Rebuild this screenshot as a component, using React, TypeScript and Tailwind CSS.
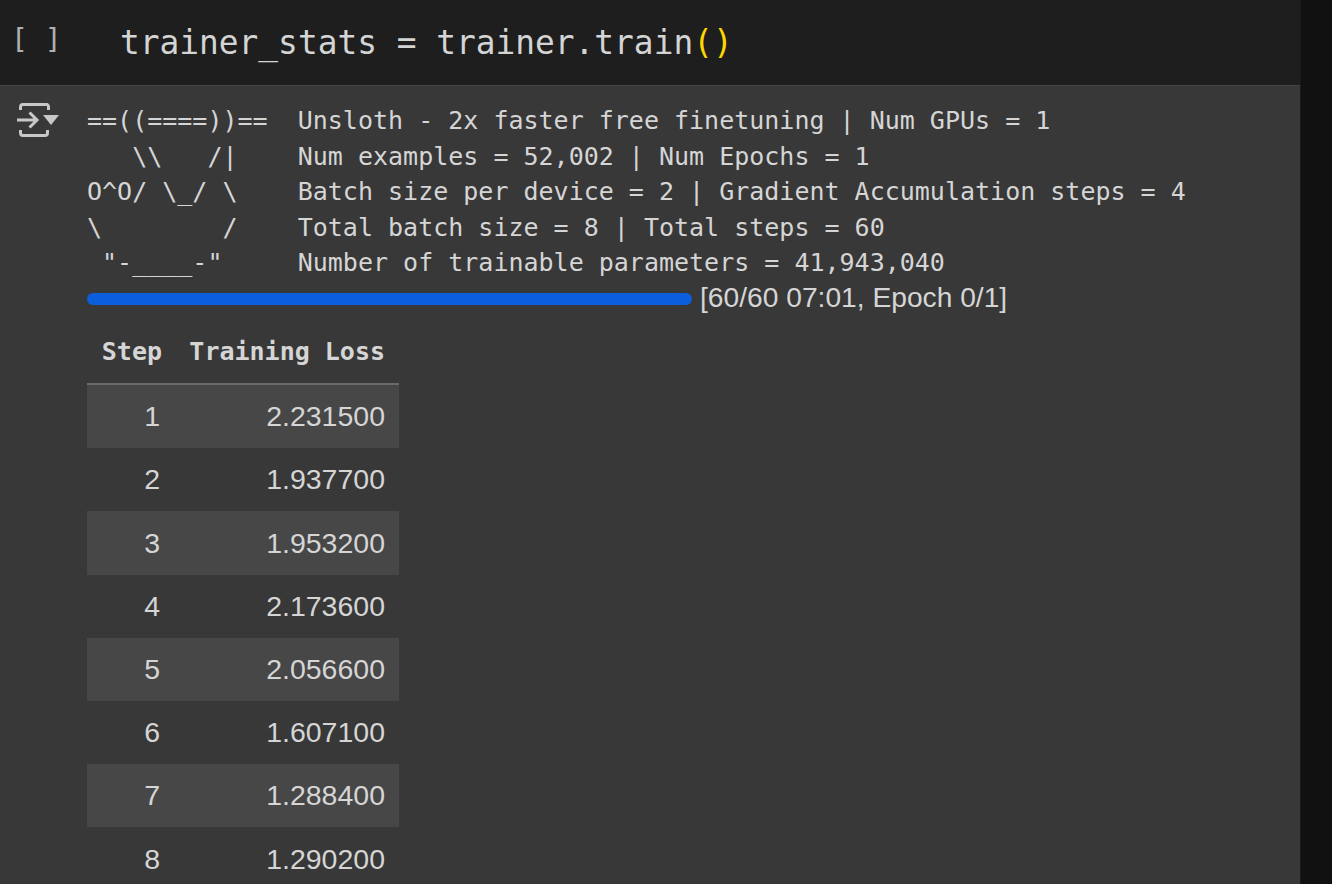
const outputLines = [
  "==((====))==  Unsloth - 2x faster free finetuning | Num GPUs = 1",
  "   \\\\   /|    Num examples = 52,002 | Num Epochs = 1",
  "O^O/ \\_/ \\    Batch size per device = 2 | Gradient Accumulation steps = 4",
  "\\        /    Total batch size = 8 | Total steps = 60",
  ' "-____-"     Number of trainable parameters = 41,943,040',
];

const rows = [
  ["1", "2.231500"],
  ["2", "1.937700"],
  ["3", "1.953200"],
  ["4", "2.173600"],
  ["5", "2.056600"],
  ["6", "1.607100"],
  ["7", "1.288400"],
  ["8", "1.290200"],
];

const mono = "font-['DejaVu_Sans_Mono',monospace]";

function OutputIcon() {
  return (
    <svg width="43" height="34" viewBox="0 0 43 34" fill="none" stroke="#c8c8c8" strokeWidth="3">
      <path d="M3.500 7V4a2.500 2.500 0 0 1 2.500-2.500h22A2.500 2.500 0 0 1 31.500 4v3" />
      <path d="M3.500 27v3a2.500 2.500 0 0 0 2.500 2.500h22a2.500 2.500 0 0 0 2.500-2.500v-3" />
      <path d="M0 17h20M12.500 9.500l7.500 7.500-7.500 7.500" />
      <path d="M26 12h16l-8 10z" fill="#c8c8c8" stroke="none" />
    </svg>
  );
}

export default function App() {
  return (
    <div className="flex h-[884px] w-[1332px] overflow-hidden bg-[#111111]">
      <div className="flex w-[1301px] flex-col border-r border-[#1a1a1a]">
        <div className={`flex h-[85px] shrink-0 items-start bg-[#1e1e1e] pt-[21px] text-[#d4d4d4] ${mono}`}>
          <span className="w-[120px] pl-[11px] text-[28px] leading-[38px] whitespace-pre text-[#b0b0b0]">[ ]</span>
          <span className="mt-[1px] text-[32.850px] leading-[42px] whitespace-pre">
            trainer_stats = trainer.train<span className="text-[#ffd700]">()</span>
          </span>
        </div>
        <div className="flex flex-1 border-t border-[#444444] bg-[#383838]">
          <div className="w-[87px] shrink-0 pt-[17px] pl-[17px]">
            <OutputIcon />
          </div>
          <div className="pt-[17px] text-[#d5d5d5]">
            <pre className={`text-[25px] leading-[35.600px] ${mono}`}>
              {outputLines.join("\n")}
            </pre>
            <div className="flex h-[36px] items-center font-['Liberation_Sans',sans-serif] text-[28.200px]">
              <div className="h-[12px] w-[605px] rounded-full bg-[#0b5fdc]" />
              <span className="mb-[4px] ml-[8px]">[60/60 07:01, Epoch 0/1]</span>
            </div>
            <div className="mt-[2px] w-[312px]">
              <div className={`flex h-[66px] items-center border-b-2 border-[#6a6a6a] pt-[2px] text-[25px] font-bold whitespace-pre ${mono}`}>
                <span className="w-[89px] pr-[14px] text-right">Step</span>
                <span className="flex-1 pr-[14px] text-right">Training Loss</span>
              </div>
              <div className="font-['Liberation_Sans',sans-serif] text-[28.500px]">
                {rows.map(([step, loss], i) => (
                  <div key={step} className={`flex h-[63.200px] items-center ${i % 2 === 0 ? "bg-[#474747]" : ""}`}>
                    <span className="w-[89px] pr-[16px] text-right">{step}</span>
                    <span className="flex-1 pr-[14px] text-right">{loss}</span>
                  </div>
                ))}
              </div>
            </div>
          </div>
        </div>
      </div>
    </div>
  );
}
